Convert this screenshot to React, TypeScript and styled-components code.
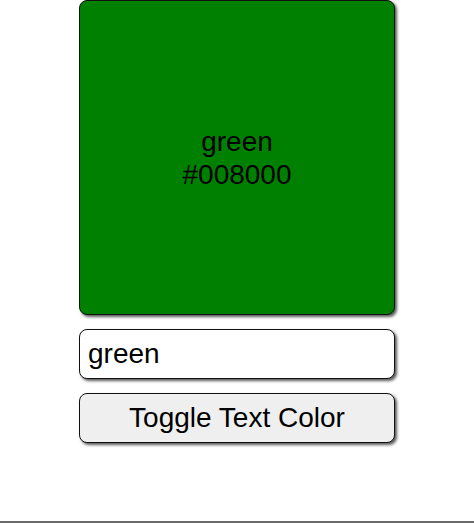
import { useState } from "react";
import styled, { createGlobalStyle } from "styled-components";

const GlobalStyle = createGlobalStyle`
  html, body {
    margin: 0;
    padding: 0;
    background: #fff;
    font-family: "Liberation Sans", Arial, sans-serif;
  }
`;

const Page = styled.div`
  height: 521px;
  border-bottom: 2px solid #6b6b6b;
  display: flex;
  flex-direction: column;
  align-items: center;
  gap: 14px;
`;

const Swatch = styled.div<{ $bg: string; $fg: string }>`
  box-sizing: border-box;
  width: 316px;
  height: 315px;
  background: ${(p) => p.$bg};
  color: ${(p) => p.$fg};
  border: 1.5px solid #111;
  border-radius: 8px;
  box-shadow: 2px 2px 3px rgba(0, 0, 0, 0.65);
  display: flex;
  flex-direction: column;
  align-items: center;
  justify-content: center;
  font-size: 28px;
  line-height: 33px;
`;

const Field = styled.input`
  box-sizing: border-box;
  width: 316px;
  height: 50px;
  padding: 0 8px;
  border: 1.5px solid #111;
  border-radius: 8px;
  box-shadow: 2px 2px 3px rgba(0, 0, 0, 0.65);
  font-family: inherit;
  font-size: 28px;
  color: #000;
  outline: none;
`;

const Button = styled.button`
  box-sizing: border-box;
  width: 316px;
  height: 50px;
  border: 1.5px solid #111;
  border-radius: 8px;
  background: #efefef;
  box-shadow: 2px 2px 3px rgba(0, 0, 0, 0.65);
  font-family: inherit;
  font-size: 28px;
  color: #000;
  cursor: pointer;
`;

const hexFor: Record<string, string> = {
  green: "#008000",
  red: "#ff0000",
  blue: "#0000ff",
};

export default function App() {
  const [name, setName] = useState("green");
  const [dark, setDark] = useState(true);
  return (
    <>
      <GlobalStyle />
      <Page>
        <Swatch $bg={name} $fg={dark ? "#000" : "#fff"}>
          <span>{name}</span>
          <span>{hexFor[name] ?? ""}</span>
        </Swatch>
        <Field value={name} onChange={(e) => setName(e.target.value)} />
        <Button onClick={() => setDark(!dark)}>Toggle Text Color</Button>
      </Page>
    </>
  );
}
